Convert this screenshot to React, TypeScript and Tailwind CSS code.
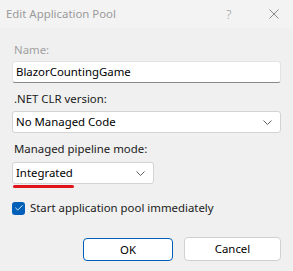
import { Check } from "lucide-react";

function Chevron() {
  return (
    <svg width="9" height="5" viewBox="0 0 9 5" className="shrink-0">
      <path d="M0.5 0.5 L4.5 4.5 L8.5 0.5" fill="none" stroke="#606060" strokeWidth="1" />
    </svg>
  );
}

function Select({ value, className }: { value: string; className: string }) {
  return (
    <div
      className={`flex items-center justify-between h-[22px] pl-[3px] pr-[8px] bg-white border border-[#d3d3d3] rounded-[3px] text-black ${className}`}
    >
      <span>{value}</span>
      <Chevron />
    </div>
  );
}

export default function App() {
  return (
    <div
      className="w-[293px] h-[271px] bg-[#f0f0f0] flex flex-col text-[11.4px] leading-[16px] text-[#1a1a1a]"
      style={{ fontFamily: '"Segoe UI", "Noto Sans", sans-serif' }}
    >
      <div className="h-[28px] flex items-center bg-[#f3f3f3] pl-[6px] text-[#9a9a9a]">
        <span className="flex-1">Edit Application Pool</span>
        <span className="w-[10px] text-[13px] font-light mr-[33px]">?</span>
        <svg width="10" height="10" viewBox="0 0 10 10" className="mr-[14px]">
          <path d="M0.5 0.5 L9.5 9.5 M9.5 0.5 L0.5 9.5" stroke="#8a8a8a" strokeWidth="1" />
        </svg>
      </div>

      <div className="flex flex-col px-[12px]">
        <label className="mt-[14px] pl-[2px] text-[#a0a0a0]">Name:</label>
        <div className="mt-[3px] h-[22px] flex items-center pl-[3px] bg-white border border-[#e3e3e3] border-b-[#8a8a8a] rounded-[3px] text-black">
          BlazorCountingGame
        </div>

        <label className="mt-[8px] pl-[2px]">.NET CLR version:</label>
        <Select value="No Managed Code" className="mt-[4px]" />

        <label className="mt-[8px] pl-[2px]">Managed pipeline mode:</label>
        <Select value="Integrated" className="mt-[5px] w-[142px]" />
        <div className="mt-[1px] ml-[1px] w-[61px] h-[3px] rounded-full bg-[#e0141b]" />

        <div className="mt-[12px] flex items-center gap-[5px]">
          <div className="w-[13px] h-[13px] rounded-[3px] bg-[#005fb8] flex items-center justify-center">
            <Check size={10} color="white" strokeWidth={2} />
          </div>
          <span>Start application pool immediately</span>
        </div>

        <div className="mt-[22px] flex justify-end items-start gap-[11px]">
          <button className="w-[90px] h-[23px] rounded-[4px] bg-white border border-[#005fb8] text-black">
            OK
          </button>
          <button className="w-[97px] h-[24px] -mt-[1px] rounded-[4px] bg-white border border-[#d0d0d0] text-black">
            Cancel
          </button>
        </div>
      </div>
    </div>
  );
}
